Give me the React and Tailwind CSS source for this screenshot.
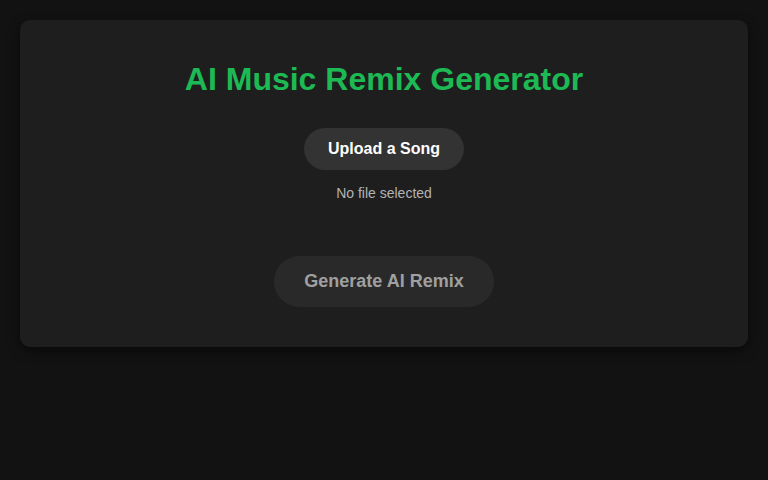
export default function App() {
  return (
    <div className="min-h-screen w-full bg-[#121212] p-5 font-['Liberation_Sans',Arial,sans-serif]">
      <div className="flex flex-col items-center rounded-[10px] bg-[#1e1e1e] px-10 py-10 shadow-[0_4px_12px_rgba(0,0,0,0.5)]">
        <h1 className="mt-px text-[32px] font-bold leading-[37px] text-[#1db954]">AI Music Remix Generator</h1>

        {/* upload control */}
        <button className="mt-[30px] rounded-full bg-[#333333] px-6 py-3 text-[16px] font-bold leading-[18px] text-white">
          Upload a Song
        </button>
        <p className="mt-[15px] text-[14px] leading-[16px] text-[#b3b3b3]">No file selected</p>

        <button
          disabled
          className="mt-[55px] rounded-full bg-[#292929] px-[30px] py-[15px] text-[18px] font-bold leading-[21px] text-[#a0a0a0]"
        >
          Generate AI Remix
        </button>
      </div>
    </div>
  );
}
